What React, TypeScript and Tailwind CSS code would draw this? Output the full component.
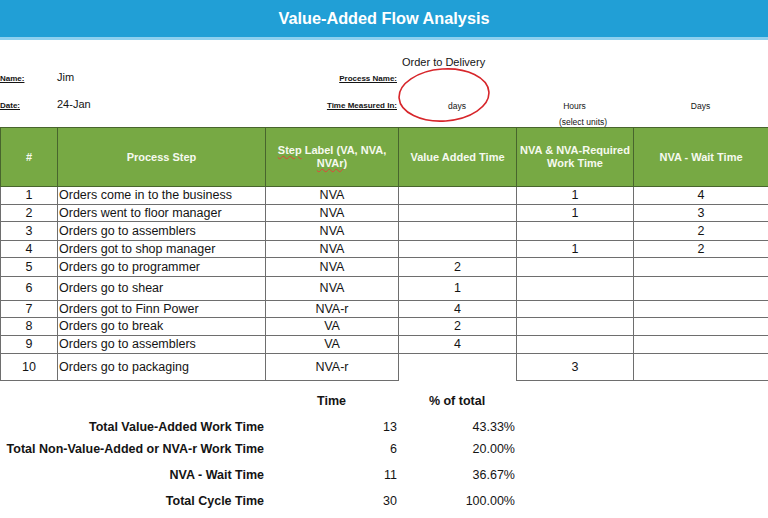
import React from 'react';

type Row = {
  n: number;
  step: string;
  label: string;
  va?: number;
  nva?: number;
  wait?: number;
  h: string;
};

const ROWS: Row[] = [
  { n: 1, step: 'Orders come in to the business', label: 'NVA', nva: 1, wait: 4, h: 'h-[18px]' },
  { n: 2, step: 'Orders went to floor manager', label: 'NVA', nva: 1, wait: 3, h: 'h-[17px]' },
  { n: 3, step: 'Orders go to assemblers', label: 'NVA', wait: 2, h: 'h-[19px]' },
  { n: 4, step: 'Orders got to shop manager', label: 'NVA', nva: 1, wait: 2, h: 'h-[17px]' },
  { n: 5, step: 'Orders go to programmer', label: 'NVA', va: 2, h: 'h-[19px]' },
  { n: 6, step: 'Orders go to shear', label: 'NVA', va: 1, h: 'h-[24px]' },
  { n: 7, step: 'Orders got to Finn Power', label: 'NVA-r', va: 4, h: 'h-[17px]' },
  { n: 8, step: 'Orders go to break', label: 'VA', va: 2, h: 'h-[18px]' },
  { n: 9, step: 'Orders go to assemblers', label: 'VA', va: 4, h: 'h-[18px]' },
  { n: 10, step: 'Orders go to packaging', label: 'NVA-r', nva: 3, h: 'h-[27px]' },
];

const SUMMARY = [
  { label: 'Total Value-Added Work Time', time: 13, pct: '43.33%', h: 'h-[22px]' },
  { label: 'Total Non-Value-Added or NVA-r Work Time', time: 6, pct: '20.00%', h: 'h-[22px]' },
  { label: 'NVA - Wait Time', time: 11, pct: '36.67%', h: 'h-[26px]' },
  { label: 'Total Cycle Time', time: 30, pct: '100.00%', h: 'h-[26px]' },
];

const COLS = 'grid grid-cols-[57px_208px_133px_118px_117px_135px]';

export default function App() {
  return (
    <div
      className="h-[518px] w-[768px] overflow-hidden bg-white text-[#141414]"
      style={{ fontFamily: '"Liberation Sans", Arial, sans-serif' }}
    >
      {/* Title bar */}
      <div className="flex h-[37px] items-center justify-center bg-[#219fd6] text-[16.3px] font-bold text-white">
        Value-Added Flow Analysis
      </div>
      <div className="h-[3px] bg-[#8ed0ef]" />

      {/* Meta block */}
      <div className="relative">
        <div className="h-[12px]" />
        <div className={`${COLS} h-[20px] items-center`}>
          <div />
          <div />
          <div />
          <div className="whitespace-nowrap pl-[4px] text-[11px]">Order to Delivery</div>
        </div>
        <div className={`${COLS} h-[14px] items-center`}>
          <div className="text-[8px] font-bold underline">Name:</div>
          <div className="-mt-[3px] text-[11px]">Jim</div>
          <div className="pr-px text-right text-[8px] font-bold underline">Process Name:</div>
        </div>
        <div className="h-[10px]" />
        <div className={`${COLS} h-[20px] items-center`}>
          <div className="text-[8px] font-bold underline">Date:</div>
          <div className="-mt-[4px] text-[11px]">24-Jan</div>
          <div className="pr-px text-right text-[8px] font-bold underline">Time Measured In:</div>
          <div className="text-center text-[8.5px]">days</div>
          <div className="text-center text-[8.5px]">Hours</div>
          <div className="text-center text-[8.5px]">Days</div>
        </div>
        <div className={`${COLS} h-[11px]`}>
          <div />
          <div />
          <div />
          <div />
          <div className="pl-[17px] pt-px text-center text-[8.5px] leading-[10px]">(select units)</div>
        </div>

        {/* Hand-drawn annotation circle */}
        <svg
          className="pointer-events-none absolute left-[397px] top-[27px]"
          width="94"
          height="56"
          viewBox="0 0 94 56"
        >
          <ellipse
            cx="47"
            cy="28"
            rx="45"
            ry="26"
            fill="none"
            stroke="#d7262b"
            strokeWidth="1.6"
            transform="rotate(-4 47 28)"
          />
        </svg>
      </div>

      {/* Main table */}
      <table className="w-[768px] table-fixed border-collapse">
        <colgroup>
          <col className="w-[57px]" />
          <col className="w-[208px]" />
          <col className="w-[133px]" />
          <col className="w-[118px]" />
          <col className="w-[117px]" />
          <col className="w-[135px]" />
        </colgroup>
        <thead>
          <tr className="h-[59px] bg-[#77a944] text-[11px] font-bold leading-[13px] text-[#f6f9ef]">
            <th className="border border-[#48652d]">#</th>
            <th className="border border-[#48652d]">Process Step</th>
            <th className="border border-[#48652d] px-1">
              <span className="underline decoration-[#e0443a] decoration-wavy decoration-1">Step</span> Label (VA, NVA,{' '}
              <span className="underline decoration-[#e0443a] decoration-wavy decoration-1">NVAr</span>)
            </th>
            <th className="border border-[#48652d]">Value Added Time</th>
            <th className="whitespace-nowrap border border-[#48652d]">
              NVA &amp; NVA-Required
              <br />
              Work Time
            </th>
            <th className="border border-[#48652d]">NVA - Wait Time</th>
          </tr>
        </thead>
        <tbody className="text-[12.5px] leading-none">
          {ROWS.map((r) => (
            <tr key={r.n} className={r.h}>
              <td className="border border-[#6e6e6e] text-center">{r.n}</td>
              <td className="whitespace-nowrap border border-[#6e6e6e] pl-px">{r.step}</td>
              <td className="border border-[#6e6e6e] text-center">{r.label}</td>
              <td
                className={`border border-[#6e6e6e] text-center ${r.n === 10 ? 'border-b-0' : ''}`}
              >
                {r.va ?? ''}
              </td>
              <td className="border border-[#6e6e6e] text-center">{r.nva ?? ''}</td>
              <td className="border border-[#6e6e6e] text-center">{r.wait ?? ''}</td>
            </tr>
          ))}
        </tbody>
      </table>

      {/* Summary */}
      <div className="text-[12.5px]">
        <div className={`${COLS} h-[34px] items-end pb-[4px]`}>
          <div />
          <div />
          <div className="text-center font-bold">Time</div>
          <div className="text-center font-bold">% of total</div>
        </div>
        {SUMMARY.map((s) => (
          <div key={s.label} className={`${COLS} ${s.h} items-end`}>
            <div className="col-span-2 whitespace-nowrap pr-px text-right font-bold">{s.label}</div>
            <div className="pr-px text-right">{s.time}</div>
            <div className="pr-px text-right">{s.pct}</div>
          </div>
        ))}
      </div>
    </div>
  );
}
